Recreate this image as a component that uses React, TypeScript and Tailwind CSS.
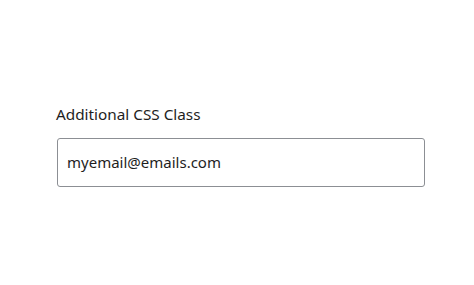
import React from 'react';

const App: React.FC = () => {
  return (
    <div className="w-[474px] h-[285px] bg-white pt-[104px] pl-[56px]" style={{ fontFamily: '"Noto Sans", "Open Sans", sans-serif' }}>
      <label className="block text-[15.3px] leading-[20px] text-[#1e1e1e]">Additional CSS Class</label>
      <div className="mt-[14px] ml-px w-[368px] h-[49px] border border-[#8c8f94] rounded-[3px] flex items-center pl-[9px]">
        <span className="text-[15px] text-[#1e1e1e]">myemail@emails.com</span>
      </div>
    </div>
  );
};

export default App;
